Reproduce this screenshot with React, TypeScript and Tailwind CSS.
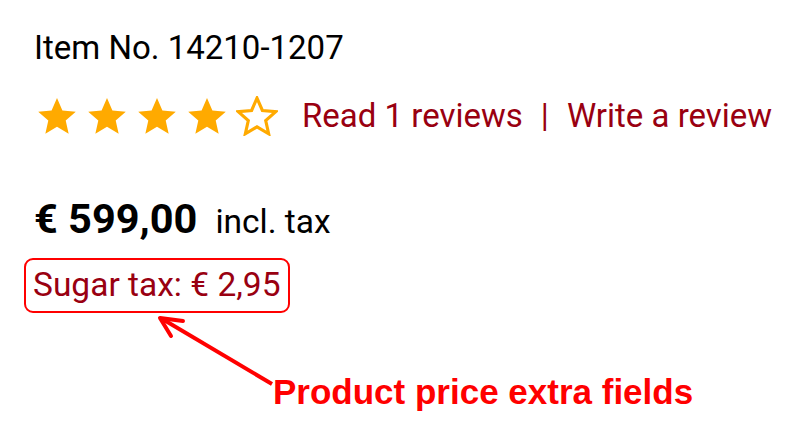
const Star = ({ filled }: { filled: boolean }) => (
  <svg width="42" height="40" viewBox="0 0 24 23" className="shrink-0">
    <path
      d="M12 1.2l3.1 7.1 7.7.7-5.8 5.1 1.7 7.6L12 17.7l-6.7 4 1.7-7.6-5.8-5.1 7.7-.7z"
      fill={filled ? '#FFAA00' : 'none'}
      stroke={filled ? 'none' : '#FFAA00'}
      strokeWidth={filled ? 0 : 1.8}
      strokeLinejoin="miter"
    />
  </svg>
)

export default function App() {
  const rating = 4
  return (
    <div className="relative w-[800px] h-[438px] bg-white overflow-hidden font-['Roboto',sans-serif]">
      <div className="flex flex-col pl-[34px] pt-[28px]">
        <div className="text-[33px] leading-[40px] text-black">Item No. 14210-1207</div>
        <div className="flex items-center mt-[26px] h-[44px]">
          <div className="flex gap-[8px] ml-[2px]">
            {[1, 2, 3, 4, 5].map(i => <Star key={i} filled={i <= rating} />)}
          </div>
          <div className="ml-[24px] text-[33px] text-[#990011] flex items-center">
            <span>Read 1 reviews</span>
            <span className="mx-[18px]">|</span>
            <span>Write a review</span>
          </div>
        </div>
        <div className="flex items-baseline mt-[57px] leading-[48px]">
          <span className="text-[41.5px] font-bold text-black">€ 599,00</span>
          <span className="ml-[18px] text-[33.5px] text-black">incl. tax</span>
        </div>
        <div className="self-start -ml-[10px] mt-[12px] px-[7px] h-[55px] flex items-center border-2 border-[#ff0000] rounded-[9px] text-[33.5px] text-[#990011]">
          Sugar tax: € 2,95
        </div>
      </div>
      <svg className="absolute left-0 top-0" width="800" height="438">
        <line x1="272" y1="384" x2="164" y2="320" stroke="#ff0000" strokeWidth="4" />
        <path d="M160 318 L183 321 M160 318 L171 336" stroke="#ff0000" strokeWidth="4" strokeLinecap="round" fill="none" />
      </svg>
      <div className="absolute left-[273px] top-[372px] font-['Liberation_Sans',sans-serif] font-bold text-[35px] leading-[40px] text-[#ff0000]">
        Product price extra fields
      </div>
    </div>
  )
}
